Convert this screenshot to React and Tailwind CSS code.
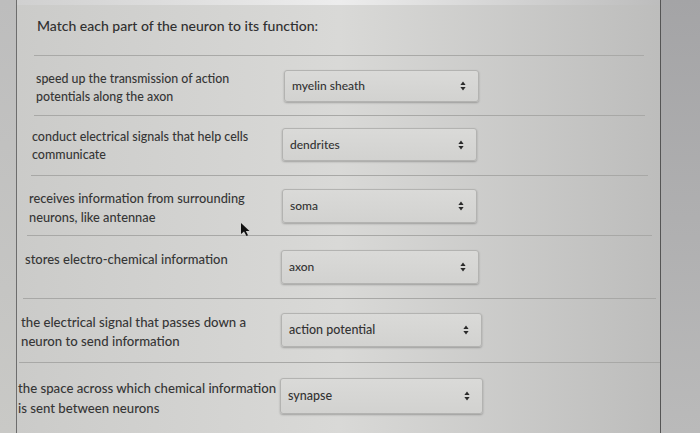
import React from "react";

const rows = [
  { text: ["speed up the transmission of action", "potentials along the axon"], opt: "myelin sheath", row: "h-[59px] pt-[14px]", txt: "w-[267px] pl-[19px] text-[12.4px] leading-[18px]", sel: "w-[195px] h-[32px] text-[12px]", line: "mx-[17px] mr-[15px]" },
  { text: ["conduct electrical signals that help cells", "communicate"], opt: "dendrites", row: "h-[59px] pt-[12px]", txt: "w-[265px] pl-[15px] text-[12.5px] leading-[18px]", sel: "w-[195px] h-[33px] text-[12px]", line: "mx-[14px] mr-[12px]" },
  { text: ["receives information from surrounding", "neurons, like antennae"], opt: "soma", row: "h-[59px] pt-[13px]", txt: "w-[265px] pl-[12px] text-[12.8px] leading-[19px]", sel: "w-[195px] h-[34px] text-[12px]", line: "mx-[10px] mr-[8px]" },
  { text: ["stores electro-chemical information"], opt: "axon", row: "h-[62px] pt-[14px]", txt: "w-[264px] pl-[8px] text-[13px] leading-[19px]", sel: "w-[198px] h-[34px] text-[12px]", line: "mx-[6px] mr-[4px]" },
  { text: ["the electrical signal that passes down a", "neuron to send information"], opt: "action potential", row: "h-[63px] pt-[14px]", txt: "w-[264px] pl-[4px] text-[13.2px] leading-[19px]", sel: "w-[201px] h-[34px] text-[12.5px]", line: "mx-[2px] mr-0" },
  { text: ["the space across which chemical information", "is sent between neurons"], opt: "synapse", row: "h-[70px] pt-[15px]", txt: "w-[263px] pl-[1px] text-[13.2px] leading-[20px]", sel: "w-[203px] h-[36px] text-[12.5px]", line: "" },
];

function Arrows() {
  return (
    <svg width="6" height="10" viewBox="0 0 6 10" className="shrink-0">
      <path d="M3 0.5 L5.6 4 L0.4 4 Z" fill="#2a2a2a" />
      <path d="M3 9.5 L5.6 6 L0.4 6 Z" fill="#2a2a2a" />
    </svg>
  );
}

export default function App() {
  return (
    <div
      className="w-[700px] h-[433px] overflow-hidden relative flex bg-[#c4c4c3] text-[#3a3a3a]"
      style={{ fontFamily: "Lato, 'Open Sans', sans-serif" }}
    >
      <div className="w-[17px] shrink-0 bg-gradient-to-b from-[#bdbdbd] to-[#c9c9c6] border-r border-[#6d6d6d]" />
      <div className="flex-1 flex flex-col bg-gradient-to-r from-[#cbcbc9] via-[#d9d9d7] to-[#bdbdbc]">
        <div className="h-[5px] bg-gradient-to-r from-[#d0d0d0] via-[#ededed] to-[#bdbdbd]" />
        <div className="h-[50px] shrink-0 pl-[20px] pt-[10px] text-[14px] font-medium text-[#303030]">
          Match each part of the neuron to its function:
        </div>
        <div className="ml-[17px] mr-[16px] h-px shrink-0 bg-[#a9a9a7]" />
        {rows.map((r, i) => (
          <div key={i} className="flex flex-col shrink-0">
            <div className={"flex items-start shrink-0 " + r.row}>
              <div className={"shrink-0 font-medium text-[#363636] " + r.txt}>
                {r.text.map((t, j) => (
                  <div key={j} className="whitespace-nowrap">{t}</div>
                ))}
              </div>
              <div
                className={
                  "shrink-0 flex items-center justify-between pl-[7px] pr-[12px] rounded-[3px] border border-[#b3b3b1] bg-gradient-to-b from-[#dadad8] to-[#d2d2d0] shadow-[0_1px_2px_rgba(0,0,0,0.25)] font-medium text-[#333] " +
                  r.sel
                }
              >
                <span>{r.opt}</span>
                <Arrows />
              </div>
            </div>
            {i < rows.length - 1 && (
              <div className={"h-px shrink-0 bg-[#a8a8a6] " + r.line} />
            )}
          </div>
        ))}
      </div>
      <div className="w-[40px] shrink-0 bg-gradient-to-b from-[#a4a4a6] to-[#bababa] border-l border-[#555]" />
      <svg
        width="12"
        height="16"
        viewBox="0 0 12 16"
        className="absolute left-[240px] top-[222px]"
      >
        <path d="M1 1 L1 12 L4 9.5 L6.5 14 L8 13.2 L5.8 9 L9.5 9 Z" fill="#111" />
      </svg>
    </div>
  );
}
